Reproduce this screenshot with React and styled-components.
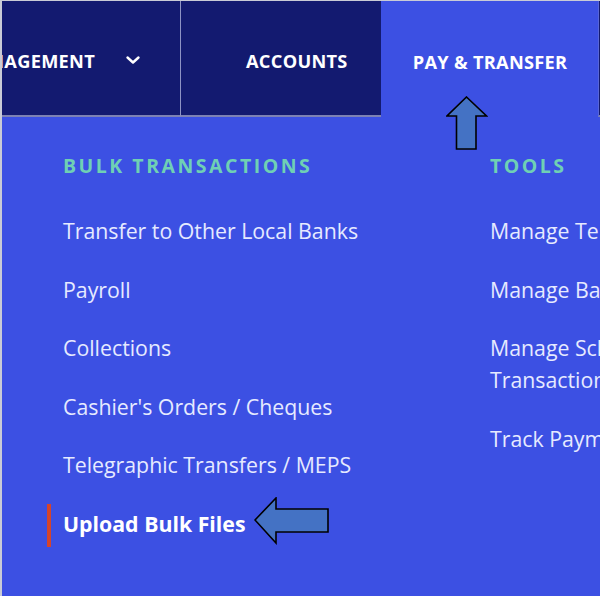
import React from 'react';
import styled, { createGlobalStyle } from 'styled-components';

const GlobalStyle = createGlobalStyle`
  html, body {
    margin: 0;
    padding: 0;
    background: #ffffff;
  }
  body {
    font-family: "Open Sans", "Liberation Sans", sans-serif;
  }
`;

const bulkLinks = [
  'Transfer to Other Local Banks',
  'Payroll',
  'Collections',
  "Cashier's Orders / Cheques",
  'Telegraphic Transfers / MEPS',
];

const toolLinks = [
  'Manage Templates',
  'Manage Bank Accounts',
  'Manage Scheduled Transactions',
  'Track Payments',
];

const App = () => {
  return (
    <>
      <GlobalStyle />
      <Frame>
        <NavBar>
          <ManageTab>
            <TabLabel>Management</TabLabel>
            <Chevron viewBox="0 0 16 16">
              <path d="M2.5 5.5 L8 10.5 L13.5 5.5" fill="none" stroke="#fff" strokeWidth="2.4" strokeLinecap="round" strokeLinejoin="round" />
            </Chevron>
          </ManageTab>
          <Tab $pl={65} $pr={33}>
            <TabLabel>Accounts</TabLabel>
          </Tab>
          <Tab $active $pl={32} $pr={31}>
            <TabLabel>Pay &amp; Transfer</TabLabel>
          </Tab>
          <NavEnd />
        </NavBar>

        <Panel>
          <Column $width={427}>
            <Heading>Bulk Transactions</Heading>
            <LinkList>
              {bulkLinks.map((l) => (
                <LinkItem key={l}>{l}</LinkItem>
              ))}
              <LinkItem $current>Upload Bulk Files</LinkItem>
            </LinkList>
          </Column>
          <Column>
            <Heading>Tools</Heading>
            <LinkList>
              {toolLinks.map((l) => (
                <LinkItem key={l} $narrow>{l}</LinkItem>
              ))}
            </LinkList>
          </Column>
        </Panel>

        <UpArrow viewBox="0 0 42 56">
          <path d="M20.5 1 L40.5 20 L30 20 L30 53 L10.5 53 L10.5 20 L1 20 Z" fill="#4472c4" stroke="#000" strokeWidth="1.6" strokeLinejoin="miter" />
        </UpArrow>
        <LeftArrow viewBox="0 0 76 48">
          <path d="M1 23 L22 1 L22 12 L74 12 L74 35 L22 35 L22 46 Z" fill="#4472c4" stroke="#000" strokeWidth="1.6" strokeLinejoin="miter" />
        </LeftArrow>
      </Frame>
    </>
  );
};

export default App;

const Frame = styled.div`
  position: relative;
  width: 600px;
  height: 596px;
  box-sizing: border-box;
  border-top: 1px solid #c9cbd6;
  border-left: 2px solid #c9cbd6;
  background: #3c50e3;
  overflow: hidden;
  display: flex;
  flex-direction: column;
`;

const NavBar = styled.div`
  display: flex;
  height: 116px;
  flex-shrink: 0;
  background: #131a70;
`;

const Tab = styled.div`
  display: flex;
  align-items: center;
  flex-shrink: 0;
  padding: 0 ${(p) => p.$pr}px 0 ${(p) => p.$pl}px;
  background: ${(p) => (p.$active ? '#3c50e3' : '#131a70')};
  border-bottom: ${(p) => (p.$active ? '0' : '2px solid #7d82b4')};
  box-sizing: border-box;
`;

const ManageTab = styled.div`
  width: 179px;
  flex-shrink: 0;
  display: flex;
  align-items: center;
  justify-content: flex-end;
  gap: 30px;
  padding-right: 39px;
  box-sizing: border-box;
  overflow: hidden;
  border-right: 1px solid #8e93c4;
  border-bottom: 2px solid #7d82b4;
`;

const TabLabel = styled.span`
  color: #ffffff;
  font-family: "Open Sans", "Liberation Sans", sans-serif;
  font-weight: 700;
  font-size: 18.2px;
  letter-spacing: 0.3px;
  text-transform: uppercase;
  white-space: nowrap;
  padding-top: 5px;
`;

const Chevron = styled.svg`
  width: 16px;
  height: 16px;
  flex-shrink: 0;
  margin-top: 4px;
`;

const NavEnd = styled.div`
  flex: 1;
  background: #131a70;
  border-left: 1px solid #5866d8;
  border-bottom: 2px solid #7d82b4;
`;

const Panel = styled.div`
  flex: 1;
  display: flex;
  padding: 36px 0 0 61px;
`;

const Column = styled.div`
  width: ${(p) => (p.$width ? `${p.$width}px` : 'auto')};
  flex-shrink: 0;
  display: flex;
  flex-direction: column;
`;

const Heading = styled.div`
  color: #6fd0b4;
  font-family: "Open Sans", "Liberation Sans", sans-serif;
  font-weight: 700;
  font-size: 19.5px;
  letter-spacing: 2.5px;
  text-transform: uppercase;
  line-height: 26px;
`;

const LinkList = styled.div`
  display: flex;
  flex-direction: column;
  gap: 26.6px;
  margin-top: 36px;
`;

const LinkItem = styled.div`
  position: relative;
  color: ${(p) => (p.$current ? '#ffffff' : '#e6eaff')};
  font-family: "Open Sans", "Liberation Sans", sans-serif;
  font-weight: ${(p) => (p.$current ? 700 : 400)};
  font-size: 21.3px;
  line-height: 32px;
  width: ${(p) => (p.$narrow ? '250px' : 'auto')};
  white-space: ${(p) => (p.$narrow ? 'normal' : 'nowrap')};

  &::before {
    content: '';
    display: ${(p) => (p.$current ? 'block' : 'none')};
    position: absolute;
    left: -16px;
    top: -4px;
    width: 4px;
    height: 43px;
    background: #d5442c;
  }
`;

const UpArrow = styled.svg`
  position: absolute;
  left: 444px;
  top: 95px;
  width: 42px;
  height: 56px;
`;

const LeftArrow = styled.svg`
  position: absolute;
  left: 252px;
  top: 496px;
  width: 76px;
  height: 48px;
`;
